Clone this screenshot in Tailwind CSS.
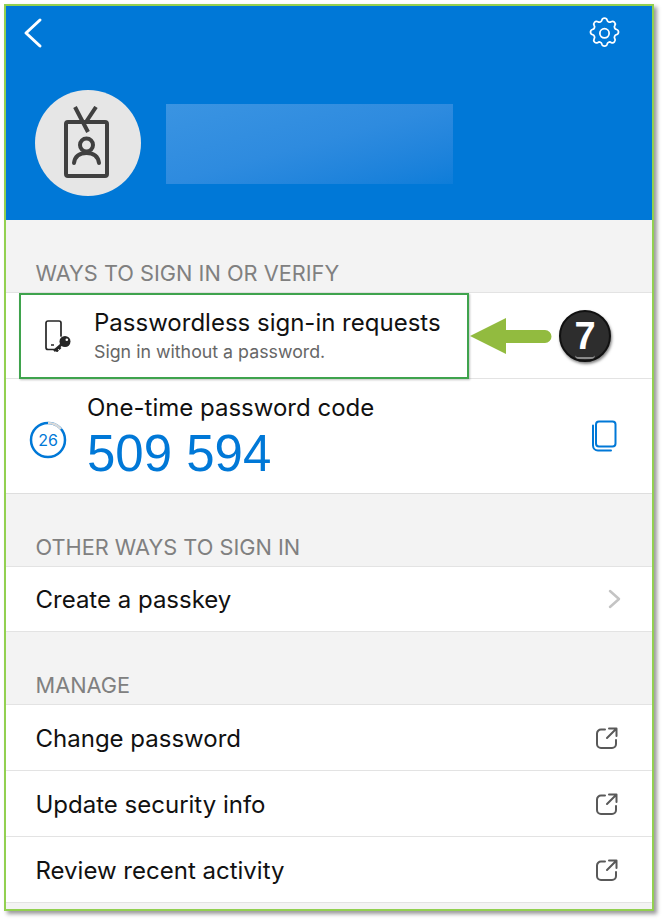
<!DOCTYPE html>
<html lang="en">
<head>
    <meta charset="UTF-8">
    <meta name="viewport" content="width=device-width, initial-scale=1.0">
    <script src="https://cdn.jsdelivr.net/npm/@tailwindcss/browser@4"></script>
    <title>Security info</title>
</head>
<body class="bg-white font-['Inter',sans-serif] h-[922px] overflow-hidden">
    <div class="pt-[4px] pl-[4px]">
        <!-- Phone frame -->
        <div class="relative w-[650px] h-[907px] border-2 border-[#92d050] bg-[#f3f3f3] shadow-[3px_3px_4px_rgba(0,0,0,0.4)] overflow-hidden flex flex-col">
            <!-- Header -->
            <header class="bg-[#0078d7] h-[214px] shrink-0 pl-[15px] pr-[16px] flex flex-col">
                <div class="flex items-center justify-between h-[54px]">
                    <svg class="w-[24px] h-[32px]" viewBox="0 0 24 32" fill="none" stroke="white" stroke-width="3" stroke-linecap="round" stroke-linejoin="round"><path d="M19 3 L5 16 L19 29"/></svg>
                    <svg class="w-[37px] h-[37px] mr-[13px]" viewBox="0 0 24 24" fill="none" stroke="white" stroke-width="1.150" stroke-linecap="round" stroke-linejoin="round"><path d="M10.3 2.3c.4-1.7 3-1.7 3.4 0a1.7 1.7 0 0 0 2.6 1.1c1.5-.9 3.3.8 2.4 2.4a1.7 1.7 0 0 0 1.1 2.6c1.7.4 1.7 3 0 3.4a1.700 1.700 0 0 0-1.1 2.6c.9 1.5-.8 3.3-2.4 2.4a1.7 1.7 0 0 0-2.6 1.1c-.4 1.7-3 1.7-3.4 0a1.7 1.7 0 0 0-2.6-1.1c-1.5.9-3.3-.8-2.4-2.4a1.7 1.7 0 0 0-1.1-2.6c-1.7-.4-1.7-3 0-3.4a1.7 1.7 0 0 0 1.1-2.6c-.9-1.5.8-3.3 2.4-2.4a1.7 1.7 0 0 0 2.6-1.1z" transform="translate(0 1)"/><circle cx="12" cy="11.9" r="3"/></svg>
                </div>
                <div class="flex items-center mt-[30px] pl-[14px] gap-[25px]">
                    <div class="w-[106px] h-[106px] rounded-full bg-[#e6e6e6] flex items-center justify-center shrink-0">
                        <svg class="w-[52px] h-[74px]" viewBox="0 0 52 74" fill="none" stroke="#404040" stroke-width="4" stroke-linecap="round" stroke-linejoin="round"><rect x="4" y="16" width="41" height="54" rx="2"/><path d="M13 1 L26 26 M34 1 L24 16" stroke-linecap="butt"/><circle cx="24.500" cy="39" r="6.500"/><path d="M12 57c1-7 6-10 12.500-10s11.500 3 12.500 10"/></svg>
                    </div>
                    <div class="w-[287px] h-[80px] mt-[2px] bg-gradient-to-br from-[#3a94e2] via-[#2e8bdf] to-[#0d7dd9]"></div>
                </div>
            </header>

            <!-- Ways to sign in -->
            <h2 class="text-[21.750px] leading-[24px] text-[#808080] pl-[29.500px] pt-[41px] pb-[7px]">WAYS TO SIGN IN OR VERIFY</h2>
            <div class="bg-white border-y border-[#e3e3e3] h-[87px] shrink-0 flex items-center pl-[38px]">
                <svg class="w-[27px] h-[32px] shrink-0" viewBox="0 0 27 32" fill="none"><path d="M12 29.500H4a2 2 0 0 1-2-2V3a2 2 0 0 1 2-2h11a2 2 0 0 1 2 2v13" stroke="#262626" stroke-width="1.700" stroke-linecap="round"/><path d="M7 25h3" stroke="#262626" stroke-width="1.500"/><circle cx="21" cy="21.500" r="5.500" fill="#262626"/><circle cx="22.800" cy="19.800" r="1.300" fill="white"/><path d="M18 24 L10 31 M12 29.500l2 2M14.500 27l2 2" stroke="#262626" stroke-width="2.600"/></svg>
                <div class="ml-[23px] -mt-[1px]">
                    <div class="text-[24px] leading-[30px] text-[#111]">Passwordless sign-in requests</div>
                    <div class="text-[17.800px] leading-[22px] text-[#666] mt-[3px]">Sign in without a password.</div>
                </div>
            </div>
            <div class="bg-white border-b border-[#dedede] h-[115px] shrink-0 flex items-center pl-[23px] pr-[35px]">
                <svg class="w-[38px] h-[38px] shrink-0 mt-[7px]" viewBox="0 0 38 38" fill="none" stroke-width="2.500"><circle cx="19" cy="19" r="17" stroke="#0078d7"/><path d="M19 2a17 17 0 0 1 13 6" stroke="#d9d9d9"/><text x="19" y="25" text-anchor="middle" font-size="16" fill="#0078d7" stroke="none" font-family="Inter">26</text></svg>
                <div class="ml-[20px] flex-1 mt-[4px]">
                    <div class="text-[24px] leading-[30px] text-[#111]">One-time password code</div>
                    <div class="text-[51px] leading-[58px] mt-[2px] text-[#0078d7] font-['Liberation_Sans',sans-serif]">509 594</div>
                </div>
                <svg class="w-[26px] h-[32px] shrink-0" viewBox="0 0 26 32" fill="none" stroke="#0078d7" stroke-width="2" stroke-linecap="round"><rect x="5" y="1.500" width="19.500" height="25" rx="3"/><path d="M2 5.500v20a5 5 0 0 0 5 5h13"/></svg>
            </div>

            <!-- Other ways -->
            <h2 class="text-[21.750px] leading-[24px] text-[#808080] pl-[29.500px] pt-[41px] pb-[7px]">OTHER WAYS TO SIGN IN</h2>
            <div class="bg-white border-y border-[#e3e3e3] h-[66px] shrink-0 flex items-center justify-between pl-[29.500px] pr-[30px]">
                <span class="text-[24px] text-[#111] mt-[2px]">Create a passkey</span>
                <svg class="w-[14px] h-[20px]" viewBox="0 0 14 20" fill="none" stroke="#c4c4c4" stroke-width="2.500" stroke-linecap="round" stroke-linejoin="round"><path d="M2 2 L11 10 L2 18"/></svg>
            </div>

            <!-- Manage -->
            <h2 class="text-[21.750px] leading-[24px] text-[#808080] pl-[29.500px] pt-[41px] pb-[7px]">MANAGE</h2>
            <div class="bg-white border-t border-[#e3e3e3]">
                <div class="h-[66px] border-b border-[#e3e3e3] flex items-center justify-between pl-[29.500px] pr-[34px]">
                    <span class="text-[24px] text-[#111] mt-[2px]">Change password</span>
                    <svg class="w-[22px] h-[22px]" viewBox="0 0 22 22" fill="none" stroke="#595959" stroke-width="2" stroke-linecap="round" stroke-linejoin="round"><path d="M9 2.500H5a4 4 0 0 0-4 4V17a4 4 0 0 0 4 4h11a4 4 0 0 0 4-4v-4"/><path d="M13 1.500h7.500V9M20 2 L11 11"/></svg>
                </div>
                <div class="h-[66px] border-b border-[#e3e3e3] flex items-center justify-between pl-[29.500px] pr-[34px]">
                    <span class="text-[24px] text-[#111] mt-[2px]">Update security info</span>
                    <svg class="w-[22px] h-[22px]" viewBox="0 0 22 22" fill="none" stroke="#595959" stroke-width="2" stroke-linecap="round" stroke-linejoin="round"><path d="M9 2.500H5a4 4 0 0 0-4 4V17a4 4 0 0 0 4 4h11a4 4 0 0 0 4-4v-4"/><path d="M13 1.500h7.500V9M20 2 L11 11"/></svg>
                </div>
                <div class="h-[66px] border-b border-[#e3e3e3] flex items-center justify-between pl-[29.500px] pr-[34px]">
                    <span class="text-[24px] text-[#111] mt-[2px]">Review recent activity</span>
                    <svg class="w-[22px] h-[22px]" viewBox="0 0 22 22" fill="none" stroke="#595959" stroke-width="2" stroke-linecap="round" stroke-linejoin="round"><path d="M9 2.500H5a4 4 0 0 0-4 4V17a4 4 0 0 0 4 4h11a4 4 0 0 0 4-4v-4"/><path d="M13 1.500h7.500V9M20 2 L11 11"/></svg>
                </div>
            </div>

            <!-- Annotation overlay -->
            <div class="absolute left-[13px] top-[287px] w-[450px] h-[86px] border-2 border-[#3fa34d] shadow-[1px_1px_2px_rgba(0,0,0,0.25)]"></div>
            <svg class="absolute left-[463px] top-[311px] w-[86px] h-[42px]" viewBox="0 0 86 42"><path d="M1 19 L37 1 V13 H76 a6.500 6.500 0 0 1 0 13 H37 V37 Z" fill="#92bb3f"/></svg>
            <div class="absolute left-[553px] top-[304px] w-[52px] h-[52px] rounded-full bg-[#2d2d2d] border-2 border-[#111] shadow-[1px_2px_3px_rgba(0,0,0,0.5)] flex items-center justify-center text-white text-[38px] font-bold leading-none font-['Liberation_Sans',sans-serif]">
                7
                <div class="absolute bottom-[1px] left-[14px] w-[20px] h-[4px] rounded-b-full border-b-2 border-[#8a8a8a]"></div>
            </div>
        </div>
    </div>
</body>
</html>
